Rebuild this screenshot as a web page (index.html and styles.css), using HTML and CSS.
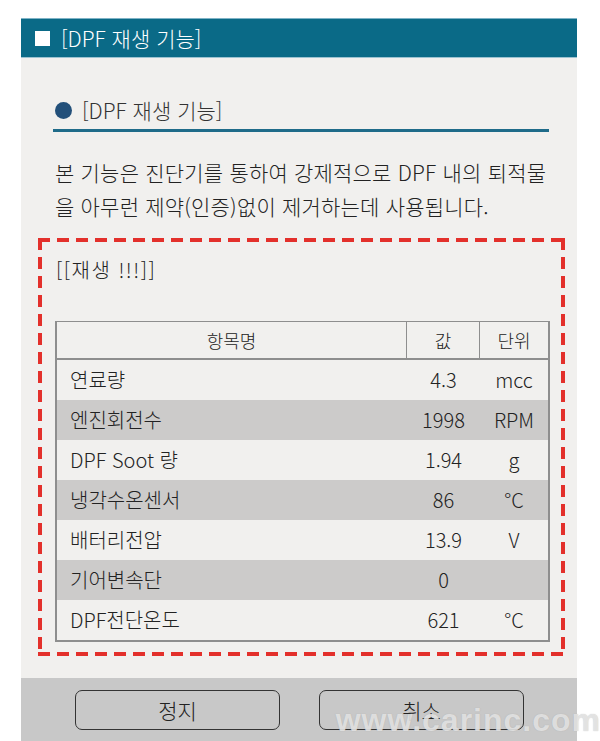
FILE: index.html
```html
<!DOCTYPE html>
<html lang="ko">
<head>
<meta charset="utf-8">
<link rel="stylesheet" href="styles.css">
</head>
<body>
<div class="panel">
  <div class="titlebar"><span class="sq"></span><span>[DPF 재생 기능]</span></div>
  <div class="content">
    <div class="section"><span class="dot"></span><span>[DPF 재생 기능]</span></div>
    <p class="desc">본 기능은 진단기를 통하여 강제적으로 DPF 내의 퇴적물<br>을 아무런 제약(인증)없이 제거하는데 사용됩니다.</p>
    <div class="dashbox">
      <div class="regen">[[재생 !!!]]</div>
      <table class="data">
        <thead>
          <tr><th class="c-name">항목명</th><th class="c-val">값</th><th class="c-unit">단위</th></tr>
        </thead>
        <tbody>
          <tr><td class="n">연료량</td><td>4.3</td><td>mcc</td></tr>
          <tr class="alt"><td class="n">엔진회전수</td><td>1998</td><td>RPM</td></tr>
          <tr><td class="n">DPF Soot 량</td><td>1.94</td><td>g</td></tr>
          <tr class="alt"><td class="n">냉각수온센서</td><td>86</td><td>°C</td></tr>
          <tr><td class="n">배터리전압</td><td>13.9</td><td>V</td></tr>
          <tr class="alt"><td class="n">기어변속단</td><td>0</td><td></td></tr>
          <tr><td class="n">DPF전단온도</td><td>621</td><td>°C</td></tr>
        </tbody>
      </table>
    </div>
  </div>
  <div class="footer">
    <button class="btn">정지</button>
    <button class="btn">취소</button>
    <span class="wm">www.carinc.com</span>
  </div>
</div>
</body>
</html>
```
FILE: styles.css
```css
html, body { margin: 0; padding: 0; background: #ffffff; }
body {
  font-family: "Noto Sans CJK KR", "Noto Sans", sans-serif;
  font-weight: 300;
  color: #222;
}
.panel {
  margin: 18px 0 0 21px;
  width: 556px;
  position: relative;
  background: #f1f0ee;
}
.titlebar {
  height: 40px;
  background: #0a6a87;
  border-top: 1px solid #7fb3c6;
  border-bottom: 1px solid #9cc3d1;
  box-sizing: border-box;
  display: flex;
  align-items: center;
  gap: 11px;
  padding-left: 14px;
  color: #ffffff;
  font-size: 21px;
  line-height: 28px;
}
.sq { width: 15px; height: 15px; background: #ffffff; display: inline-block; }
.content { padding: 38px 0 22px 0; }
.section {
  display: flex;
  align-items: center;
  gap: 10px;
  font-size: 21px;
  line-height: 28px;
  color: #333;
  width: 494px;
  margin-left: 32px;
  padding-left: 2px;
  padding-bottom: 5px;
  border-bottom: 3px solid #1f6b89;
}
.dot { width: 17px; height: 17px; border-radius: 50%; background: #23507a; display: inline-block; }
.desc {
  margin: 23px 0 0 34px;
  font-size: 21px;
  line-height: 34px;
  letter-spacing: 0.2px;
  color: #222;
  white-space: nowrap;
}
.dashbox {
  margin: 15px 0 0 17px;
  width: 527px;
  box-sizing: border-box;
  padding: 18px 0 14px 17px;
  background:
    repeating-linear-gradient(to right, #e3302b 0 12px, transparent 12px 19px) left top / 100% 4px no-repeat,
    repeating-linear-gradient(to right, #e3302b 0 12px, transparent 12px 19px) left bottom / 100% 4px no-repeat,
    repeating-linear-gradient(to bottom, #e3302b 0 12px, transparent 12px 19px) left top / 4px 100% no-repeat,
    repeating-linear-gradient(to bottom, #e3302b 0 12px, transparent 12px 19px) right top / 4px 100% no-repeat;
}
.regen { font-size: 20px; line-height: 28px; height: 65px; letter-spacing: 1.5px; color: #222; padding-left: 1px; }
.data {
  border-collapse: separate;
  border-spacing: 0;
  width: 495px;
  font-size: 20px;
  border: 1px solid #8e8e8e;
  border-width: 1px 2px 2px 2px;
}
.data th {
  line-height: 36px;
  font-weight: 300;
  background: #f1f0ee;
  border-right: 1px solid #8e8e8e;
  border-bottom: 2px solid #8e8e8e;
  font-size: 18px;
  padding: 0;
}
.data th:last-child { border-right: none; }
.c-name { width: 349px; }
.c-val { width: 72px; }
.data td { line-height: 40px; padding: 0; text-align: center; background: #f1f0ee; }
.data td.n { text-align: left; padding-left: 13px; }
.data tr.alt td { background: #cccbca; }
.footer {
  height: 64px;
  background: #c8c8c8;
  display: flex;
  align-items: center;
  gap: 39px;
  padding-left: 54px;
  position: relative;
}
.btn {
  width: 205px;
  height: 40px;
  border: 1px solid #333;
  border-radius: 7px;
  background: #c8c8c8;
  font-family: inherit;
  font-weight: 300;
  font-size: 21px;
  color: #222;
  padding: 0;
}
.wm {
  position: absolute;
  right: -24px;
  bottom: 3px;
  font-family: "Liberation Sans", sans-serif;
  font-size: 32px;
  font-weight: bold;
  color: rgba(236, 236, 236, 0.8);
  text-shadow: 0 0 1px rgba(150, 150, 150, 0.6);
  letter-spacing: 1px;
}
```
